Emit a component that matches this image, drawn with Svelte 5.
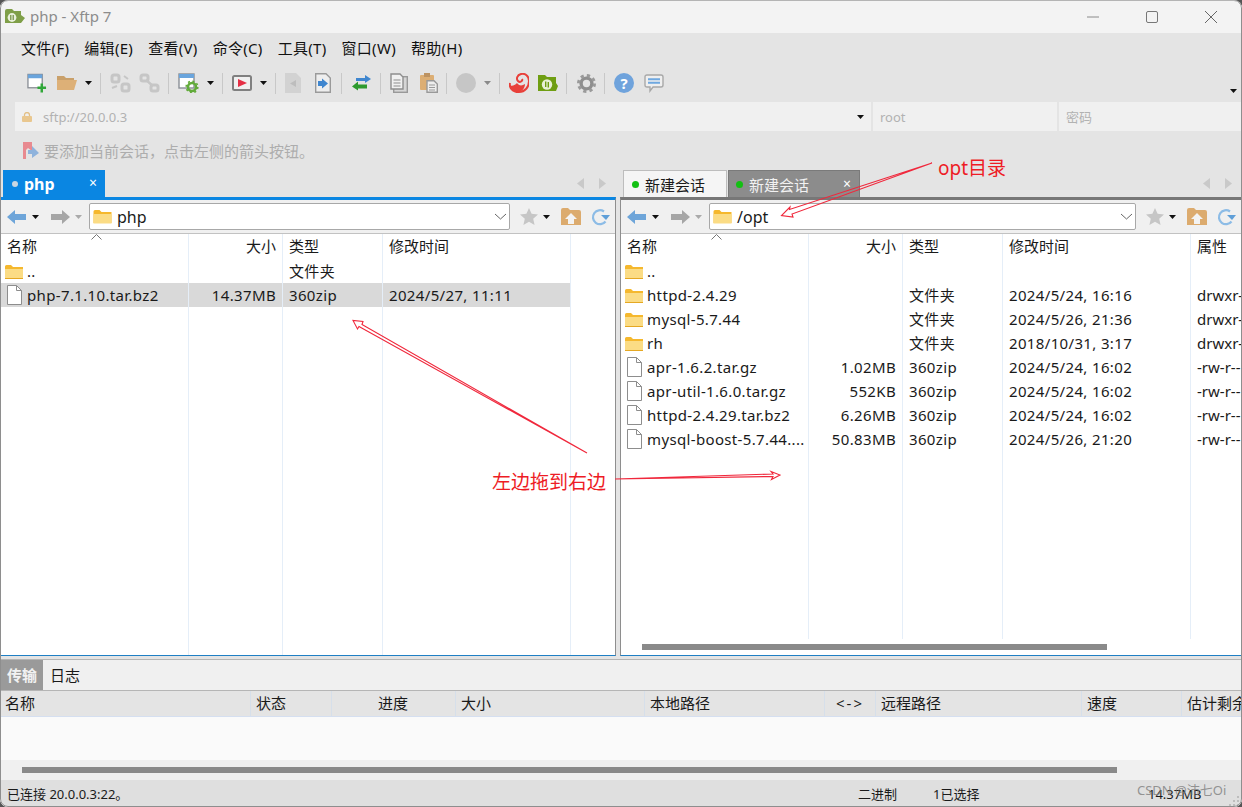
<script lang="ts">
  const menus = ["文件(F)", "编辑(E)", "查看(V)", "命令(C)", "工具(T)", "窗口(W)", "帮助(H)"];

  const leftCols = [
    { label: "名称", width: 188, name: true, sort: true, cells: ["..", "php-7.1.10.tar.bz2"] },
    { label: "大小", width: 94, right: true, cells: ["", "14.37MB"] },
    { label: "类型", width: 100, cells: ["文件夹", "360zip"] },
    { label: "修改时间", width: 188, cells: ["", "2024/5/27, 11:11"] },
    { label: "", width: 44, fill: true, cells: [] }
  ];

  const rightCols = [
    { label: "名称", width: 188, name: true, sort: true, cells: ["..", "httpd-2.4.29", "mysql-5.7.44", "rh", "apr-1.6.2.tar.gz", "apr-util-1.6.0.tar.gz", "httpd-2.4.29.tar.bz2", "mysql-boost-5.7.44...."] },
    { label: "大小", width: 94, right: true, cells: ["", "", "", "", "1.02MB", "552KB", "6.26MB", "50.83MB"] },
    { label: "类型", width: 100, cells: ["", "文件夹", "文件夹", "文件夹", "360zip", "360zip", "360zip", "360zip"] },
    { label: "修改时间", width: 188, cells: ["", "2024/5/24, 16:16", "2024/5/26, 21:36", "2018/10/31, 3:17", "2024/5/24, 16:02", "2024/5/24, 16:02", "2024/5/24, 16:02", "2024/5/26, 21:20"] },
    { label: "属性", width: 52, fill: true, cells: ["", "drwxr-", "drwxr-", "drwxr-", "-rw-r--", "-rw-r--", "-rw-r--", "-rw-r--"] }
  ];

  const transferCols = [
    { label: "名称", width: 251 },
    { label: "状态", width: 81 },
    { label: "进度", width: 124, right: true },
    { label: "大小", width: 189 },
    { label: "本地路径", width: 180 },
    { label: "<->", width: 51, center: true },
    { label: "远程路径", width: 206 },
    { label: "速度", width: 100 },
    { label: "估计剩余", width: 60 }
  ];
</script>

{#snippet folder()}
  <svg class="ficon" width="18" height="15" viewBox="0 0 18 15">
    <path d="M0 2.5Q0 1 1.5 1H6L8 3H18V14H0Z" fill="#f5b82e"/>
    <path d="M0 5H18V14.5H0Z" fill="#fbdc85"/>
    <path d="M0 14H18V15H0Z" fill="#e5a823"/>
  </svg>
{/snippet}

{#snippet file()}
  <svg class="ficon" width="18" height="22" viewBox="0 0 18 22">
    <path d="M2.5 1.5H11.5L16.5 6.5V20.5H2.5Z" fill="#fff" stroke="#8d8d8d"/>
    <path d="M11.5 1.5V6.5H16.5" fill="none" stroke="#8d8d8d"/>
  </svg>
{/snippet}

{#snippet caret(color = "#111")}
  <svg class="caret" width="7" height="4" viewBox="0 0 7 4"><path d="M0 0H7L3.5 4Z" fill={color}/></svg>
{/snippet}

{#snippet navBar(path: string, fieldWidth: number)}
  <div class="nav">
    <svg width="20" height="16" viewBox="0 0 20 16"><path d="M0 8L8 1V5H19V11H8V15Z" fill="#6ea5d9"/></svg>
    {@render caret()}
    <svg class="fwd" width="20" height="16" viewBox="0 0 20 16"><path d="M20 8L12 1V5H1V11H12V15Z" fill="#a6a6a6"/></svg>
    {@render caret("#aaa")}
    <div class="pathbox" style="width: {fieldWidth}px">
      <svg width="19" height="15" viewBox="0 0 18 15">
        <path d="M0 2.5Q0 1 1.5 1H6L8 3H18V14H0Z" fill="#f5b82e"/>
        <path d="M0 5H18V14.5H0Z" fill="#fbdc85"/>
      </svg>
      <span class="pathtext">{path}</span>
      <svg class="chev" width="13" height="7" viewBox="0 0 13 7"><path d="M1 1L6.5 6L12 1" fill="none" stroke="#666"/></svg>
    </div>
    <svg width="18" height="17" viewBox="0 0 18 17"><path d="M9 0L11.6 5.8L18 6.5L13.2 10.8L14.6 17L9 13.8L3.4 17L4.8 10.8L0 6.5L6.4 5.8Z" fill="#c6c6c6"/></svg>
    {@render caret()}
    <svg class="home" width="20" height="17" viewBox="0 0 20 17">
      <path d="M0 2Q0 0 2 0H7L9 2H18Q20 2 20 4V17H0Z" fill="#dcab6e"/>
      <path d="M10 5L16 11H13V16H7V11H4Z" fill="#f3f3f3"/>
    </svg>
    <svg class="refresh" width="20" height="18" viewBox="0 0 20 18">
      <path d="M15.5 13.5A7 7 0 1 1 14 3.5" fill="none" stroke="#8dbce6" stroke-width="2.2"/>
      <path d="M11 8H20L16 13Z" fill="#5f9fd8" transform="translate(0 -1)"/>
    </svg>
  </div>
{/snippet}

{#snippet fileTable(cols: any[], selected: number)}
  <div class="table">
    {#each cols as col}
      <div class="col" class:fill={col.fill} style="width: {col.width}px">
        <div class="colhead" class:end={col.right}>
          {col.label}
          {#if col.sort}
            <svg class="sort" width="11" height="6" viewBox="0 0 11 6"><path d="M0.5 5.5L5.5 0.5L10.5 5.5" fill="none" stroke="#777"/></svg>
          {/if}
        </div>
        <div class="cells">
          {#each col.cells as cell, i}
            <div class="cell" class:end={col.right} class:sel={i === selected}>
              {#if col.name}
                {#if /\.(gz|bz2)$|\.\.\.\.$/.test(cell)}
                  {@render file()}
                {:else}
                  {@render folder()}
                {/if}
              {/if}
              <span class="celltext">{cell}</span>
            </div>
          {/each}
        </div>
      </div>
    {/each}
  </div>
{/snippet}

<div class="window">
  <header class="titlebar">
    <svg width="20" height="16" viewBox="0 0 20 16">
      <path d="M0 2Q0 0 2 0H7L9 2H16V6L20 9L16 14H0Z" fill="#7f9f48"/>
      <circle cx="7" cy="8.5" r="4.4" fill="#e9f0dc"/>
      <path d="M5.8 6V11M8.2 6V11" stroke="#6d8d3c" stroke-width="1.2"/>
    </svg>
    <span class="apptitle">php - Xftp 7</span>
    <div class="winbtns">
      <svg width="14" height="14" viewBox="0 0 14 14"><path d="M1 7H13" stroke="#8a8a8a"/></svg>
      <svg width="14" height="14" viewBox="0 0 14 14"><rect x="1.5" y="1.5" width="11" height="11" rx="1.5" fill="none" stroke="#777"/></svg>
      <svg width="14" height="14" viewBox="0 0 14 14"><path d="M1 1L13 13M13 1L1 13" stroke="#666"/></svg>
    </div>
  </header>

  <nav class="menubar">
    {#each menus as m}<span class="menu">{m}</span>{/each}
  </nav>

  <div class="toolbar">
    <svg class="t" width="20" height="20" viewBox="0 0 21 20">
      <rect x="1" y="1" width="15" height="14" fill="#fff" stroke="#8a8f96" stroke-width="1.4"/>
      <rect x="1" y="1" width="15" height="4" fill="#6aa5dd"/>
      <path d="M11 15H20M15.5 10.5V20" stroke="#31a739" stroke-width="2.6"/>
    </svg>
    <svg class="t m2" width="20" height="16" viewBox="0 0 20 16">
      <path d="M0 1H7L9 3H17V6H0Z" fill="#c9a06a"/>
      <path d="M0 5H20L17 15H0Z" fill="#ddb077"/>
    </svg>
    {@render caret()}
    <i class="sep"></i>
    <svg class="t" width="21" height="20" viewBox="0 0 21 20" fill="none" stroke="#c6c6c6" stroke-width="3">
      <rect x="2" y="2" width="7" height="7" rx="2"/>
      <rect x="12" y="11" width="7" height="7" rx="2"/>
      <path d="M2 15L7 13M14 3L18 6" stroke-width="2"/>
    </svg>
    <svg class="t" width="21" height="20" viewBox="0 0 21 20" fill="none" stroke="#c6c6c6" stroke-width="3">
      <rect x="2" y="2" width="7" height="6" rx="2"/>
      <rect x="12" y="12" width="7" height="6" rx="2"/>
      <path d="M7 7L14 13" stroke-width="2.4"/>
    </svg>
    <i class="sep"></i>
    <svg class="t" width="21" height="20" viewBox="0 0 21 20">
      <rect x="1" y="1" width="15" height="14" fill="#fff" stroke="#8a8f96" stroke-width="1.4"/>
      <rect x="1" y="1" width="15" height="4" fill="#6aa5dd"/>
      <circle cx="14" cy="14" r="4" fill="none" stroke="#62ab3a" stroke-width="2.6"/>
      <circle cx="14" cy="14" r="5.8" fill="none" stroke="#62ab3a" stroke-width="1.6" stroke-dasharray="2 2.5"/>
    </svg>
    {@render caret()}
    <i class="sep"></i>
    <svg class="t" width="20" height="16" viewBox="0 0 20 16">
      <rect x="1" y="1" width="18" height="14" rx="1.5" fill="#f0f0f0" stroke="#808080" stroke-width="2"/>
      <path d="M6 4L15 8L6 12Z" fill="#e52f45"/>
    </svg>
    {@render caret()}
    <i class="sep"></i>
    <svg class="t" width="16" height="20" viewBox="0 0 16 20">
      <path d="M0 0H11L16 5V20H0Z" fill="#d2d2d2"/>
      <path d="M11 7V14L5 10.5Z" fill="#bdbdbd"/>
    </svg>
    <svg class="t m6" width="16" height="20" viewBox="0 0 16 20">
      <path d="M0.7 0.7H11L15.3 5V19.3H0.7Z" fill="#eee" stroke="#9a9a9a" stroke-width="1.4"/>
      <path d="M3 8H7V5.5L13 10.5L7 15.5V13H3Z" fill="#3f86cf"/>
    </svg>
    <i class="sep m2"></i>
    <svg class="t" width="21" height="16" viewBox="0 0 21 16">
      <path d="M5 3H14V0L20 4L14 8V6H5Z" fill="#3f86cf"/>
      <path d="M16 10H7V7L1 12L7 16V14H16Z" fill="#2e9a2e" transform="translate(0 -0.5)"/>
    </svg>
    <i class="sep"></i>
    <svg class="t" width="18" height="20" viewBox="0 0 18 20">
      <rect x="3.7" y="3.7" width="13.6" height="15.6" fill="#d6d6d6" stroke="#999" stroke-width="1.4"/>
      <path d="M1 1H10L13 4V16H1Z" fill="#f0f0f0" stroke="#8d8d8d" stroke-width="1.4"/>
      <path d="M3.5 7H10.5M3.5 10H10.5M3.5 13H10.5" stroke="#8d8d8d"/>
    </svg>
    <svg class="t m4" width="18" height="20" viewBox="0 0 18 20">
      <rect x="0" y="2" width="14" height="15" rx="1" fill="#dcae74"/>
      <rect x="4" y="0" width="6" height="4" fill="#bd9362"/>
      <path d="M7 7.7H14L17.3 11V19.3H7Z" fill="#eee" stroke="#999" stroke-width="1.4"/>
      <path d="M9 12H15M9 14.5H15M9 17H15" stroke="#9a9a9a"/>
    </svg>
    <i class="sep"></i>
    <svg class="t" width="20" height="20" viewBox="0 0 20 20"><circle cx="10" cy="10" r="10" fill="#c6c6c6"/></svg>
    {@render caret("#8a8a8a")}
    <i class="sep"></i>
    <svg class="t" width="20" height="20" viewBox="0 0 20 20">
      <path d="M1 10C0 14 3 19 10 19C16 19 20 14 20 8C20 3 16 0 12 1C8 2 7 6 9 8C11 10 14 8 13 6" fill="none" stroke="#e8403a" stroke-width="2"/>
      <path d="M0 11C2 14 5 13 8 10C10 13 13 13 16 11C16 16 12 19 9 19C4 19 1 16 0 11Z" fill="#e8403a"/>
    </svg>
    <svg class="t m1" width="20" height="17" viewBox="0 0 20 17">
      <path d="M0 0H7L9 2H18V8L20 11L18 16H0Z" fill="#6f9e12"/>
      <circle cx="9" cy="9.5" r="5.2" fill="#e8f0d5"/>
      <path d="M7.7 6.5V12M10.3 7V12.5" stroke="#6f9e12" stroke-width="1.4"/>
    </svg>
    <i class="sep"></i>
    <svg class="t m1" width="19" height="19" viewBox="0 0 19 19">
      <circle cx="9.5" cy="9.5" r="5.4" fill="none" stroke="#8f8f8f" stroke-width="3.4"/>
      <circle cx="9.5" cy="9.5" r="8" fill="none" stroke="#9a9a9a" stroke-width="3" stroke-dasharray="3.2 3.1"/>
    </svg>
    <i class="sep"></i>
    <svg class="t" width="20" height="20" viewBox="0 0 20 20">
      <circle cx="10" cy="10" r="10" fill="#6fa3dc"/>
      <text x="10" y="15.5" text-anchor="middle" class="qmark">?</text>
    </svg>
    <svg class="t m2" width="20" height="19" viewBox="0 0 20 19">
      <path d="M3 1H17Q19 1 19 3V11Q19 13 17 13H9L6 17V13H3Q1 13 1 11V3Q1 1 3 1Z" fill="#efefef" stroke="#a8a8a8" stroke-width="1.4"/>
      <path d="M4 5.2H16M4 8.8H16" stroke="#6fa8e0" stroke-width="2"/>
    </svg>
    <span class="overflow">{@render caret()}</span>
  </div>

  <div class="addressrow">
    <div class="addr host">
      <svg width="10" height="10" viewBox="0 0 10 10">
        <path d="M2.5 4V3A2.5 2.5 0 0 1 7.5 3V4" fill="none" stroke="#e3bf85" stroke-width="1.3"/>
        <rect x="0" y="4" width="10" height="6" rx="1" fill="#e9c78f"/>
      </svg>
      <span>sftp://20.0.0.3</span>
      <span class="addrcaret">{@render caret()}</span>
    </div>
    <div class="addr user">root</div>
    <div class="addr pass">密码</div>
  </div>

  <div class="hint">
    <svg width="16" height="17" viewBox="0 0 16 17">
      <path d="M0 0H9V9L5 6L3 8V17H0Z" fill="#e88a90"/>
      <path d="M5 8H9V4L16 11L9 16V12H5Z" fill="#8fb3dc"/>
    </svg>
    <span>要添加当前会话，点击左侧的箭头按钮。</span>
  </div>

  <main class="panes">
    <section class="pane local">
      <div class="tabs">
        <div class="tab active">
          <i class="dot grey"></i><b>php</b><span class="close">×</span>
        </div>
        <div class="tabnav">
          <svg width="7" height="11" viewBox="0 0 7 11"><path d="M7 0V11L0 5.5Z" fill="#c9c9c9"/></svg>
          <svg width="7" height="11" viewBox="0 0 7 11"><path d="M0 0V11L7 5.5Z" fill="#c9c9c9"/></svg>
        </div>
      </div>
      <div class="panebody blue">
        {@render navBar("php", 421)}
        {@render fileTable(leftCols, 1)}
      </div>
    </section>

    <section class="pane remote">
      <div class="tabs">
        <div class="tab plain"><i class="dot green"></i>新建会话</div>
        <div class="tab dark"><i class="dot green"></i>新建会话<span class="close">×</span></div>
        <div class="tabnav">
          <svg width="7" height="11" viewBox="0 0 7 11"><path d="M7 0V11L0 5.5Z" fill="#c9c9c9"/></svg>
          <svg width="7" height="11" viewBox="0 0 7 11"><path d="M0 0V11L7 5.5Z" fill="#c9c9c9"/></svg>
        </div>
      </div>
      <div class="panebody">
        {@render navBar("/opt", 427)}
        {@render fileTable(rightCols, -1)}
        <div class="hscroll"><i></i></div>
      </div>
    </section>
  </main>

  <section class="transfers">
    <div class="ttabs">
      <span class="ttab on">传输</span>
      <span class="ttab">日志</span>
    </div>
    <div class="thead">
      {#each transferCols as c}
        <span class="th" class:end={c.right} class:center={c.center} style="width: {c.width}px">{c.label}</span>
      {/each}
    </div>
    <div class="tbody"></div>
    <div class="tscroll"><i></i></div>
  </section>

  <footer class="status">
    <span class="connected">已连接 20.0.0.3:22。</span>
    <span class="mode">二进制</span>
    <span class="selcount">1已选择</span>
    <span class="bytes">14.37MB</span>
    <svg class="grip" width="13" height="11" viewBox="0 0 13 11" fill="#bdbdbd">
      <rect x="10" y="0" width="2" height="2"/>
      <rect x="6" y="4" width="2" height="2"/>
      <rect x="10" y="4" width="2" height="2"/>
      <rect x="2" y="8" width="2" height="2"/>
      <rect x="6" y="8" width="2" height="2"/>
      <rect x="10" y="8" width="2" height="2"/>
    </svg>
  </footer>

  <svg class="marks" width="1242" height="807" viewBox="0 0 1242 807">
    <g fill="none" stroke="#f0283c" stroke-width="1.1">
      <path d="M932 163L789.5 209.5L790 207L781.5 215.5L793 217L792 214L932 163"/>
      <path d="M587 453L362 324.5L363 321.5L353 320.5L357.5 329L359 326.5L587 453"/>
      <path d="M615 479L773 474L771 471.5L780 475L771.5 479.5L773 476.5L615 479"/>
    </g>
  </svg>
  <span class="note opt">opt目录</span>
  <span class="note drag">左边拖到右边</span>
  <span class="watermark">CSDN @沛七Oi</span>
  <div class="frame"></div>
</div>

<style>
  :global(body) {
    margin: 0;
    background: #555;
  }

  .window {
    position: relative;
    width: 1242px;
    height: 807px;
    overflow: hidden;
    display: flex;
    flex-direction: column;
    background: #e4e4e4;
    font-family: "Noto Sans", "Noto Sans CJK SC", sans-serif;
    font-size: 15px;
    color: #1a1a1a;
    box-sizing: border-box;
    border-top: 1px solid #b4b4b4;
    border-radius: 8px;
  }

  .titlebar {
    height: 32px;
    flex: none;
    background: #f3f3f3;
    display: flex;
    align-items: center;
    padding: 0 0 0 5px;
    gap: 5px;
    box-sizing: border-box;
  }

  .apptitle {
    color: #8c8c8c;
    font-size: 15px;
    padding-bottom: 2px;
  }

  .winbtns {
    margin-left: auto;
    display: flex;
    gap: 45px;
    padding-right: 24px;
  }

  .menubar {
    height: 31px;
    flex: none;
    display: flex;
    align-items: center;
    padding: 0 0 3px 21px;
    box-sizing: border-box;
    gap: 15px;
    font-size: 15px;
    letter-spacing: 0.3px;
    color: #111;
  }

  .toolbar {
    height: 38px;
    flex: none;
    display: flex;
    align-items: center;
    padding-left: 27px;
    gap: 8px;
    position: relative;
  }

  .t {
    flex: none;
  }

  .m1 {
    margin-left: 1px;
  }

  .m2 {
    margin-left: 2px;
  }

  .m4 {
    margin-left: 4px;
  }

  .m6 {
    margin-left: 6px;
  }

  .caret {
    flex: none;
    display: block;
  }

  .sep {
    width: 1px;
    height: 21px;
    background: #c8c8c8;
    flex: none;
    margin-right: 1px;
  }

  .qmark {
    fill: #fff;
    font-size: 15px;
    font-weight: 700;
    font-family: "Noto Sans", sans-serif;
  }

  .overflow {
    position: absolute;
    right: 5px;
    bottom: 9px;
  }

  .addressrow {
    height: 29px;
    flex: none;
    margin-left: 15px;
    display: flex;
    gap: 2px;
    color: #b2b2b2;
    font-size: 13px;
  }

  .addr {
    background: #f0f0f0;
    display: flex;
    align-items: center;
    padding-left: 7px;
    box-sizing: border-box;
  }

  .host {
    width: 856px;
    flex: none;
    gap: 11px;
  }

  .addrcaret {
    margin-left: auto;
    padding-right: 7px;
  }

  .user {
    width: 184px;
    flex: none;
  }

  .pass {
    flex: 1;
  }

  .hint {
    height: 39px;
    flex: none;
    display: flex;
    align-items: center;
    padding-left: 23px;
    gap: 5px;
    color: #adadad;
    font-size: 15px;
  }

  .panes {
    flex: none;
    height: 486px;
    display: flex;
    gap: 4px;
  }

  .pane {
    display: flex;
    flex-direction: column;
  }

  .local {
    width: 616px;
    flex: none;
  }

  .remote {
    flex: 1;
    min-width: 0;
  }

  .tabs {
    height: 27px;
    flex: none;
    display: flex;
    align-items: flex-end;
    position: relative;
  }

  .tab {
    display: flex;
    align-items: center;
    box-sizing: border-box;
    position: relative;
    height: 27px;
  }

  .tab.active {
    margin-left: 3px;
    width: 102px;
    background: #0a86e2;
    color: #fff;
    font-size: 16px;
    padding-left: 9px;
    gap: 6px;
  }

  .tab.plain {
    margin-left: 3px;
    width: 104px;
    background: #f5f5f5;
    border: 1px solid #bdbdbd;
    border-bottom: 0;
    padding-left: 8px;
    gap: 6px;
  }

  .tab.dark {
    width: 132px;
    margin-left: 1px;
    background: #8c8c8c;
    border: 1px solid #7a7a7a;
    border-bottom: 0;
    color: #f2f2f2;
    padding-left: 7px;
    gap: 6px;
  }

  .dot {
    width: 6px;
    height: 6px;
    border-radius: 50%;
    flex: none;
  }

  .dot.grey {
    background: #c9d6e2;
  }

  .dot.green {
    background: #12c012;
    width: 7px;
    height: 7px;
  }

  .close {
    position: absolute;
    right: 8px;
    top: 3px;
    font-size: 14px;
    font-weight: 400;
    color: #fff;
  }

  .tabnav {
    margin-left: auto;
    display: flex;
    gap: 15px;
    padding: 0 10px 8px 0;
  }

  .panebody {
    flex: 1;
    min-height: 0;
    display: flex;
    flex-direction: column;
    border: 1px solid #8e8e8e;
    border-top-width: 3px;
    border-top-color: #777;
    border-bottom: 1px solid #1f7fc4;
    border-right: 0;
    background: #fff;
  }

  .panebody.blue {
    border-top-color: #0a86e2;
    border-right: 1px solid #8e8e8e;
  }

  .nav {
    height: 33px;
    flex: none;
    background: #f0f0f0;
    display: flex;
    align-items: center;
    gap: 5px;
    padding-left: 6px;
    border-bottom: 1px solid #c2c2c2;
  }

  .fwd {
    margin-left: 6px;
  }

  .pathbox {
    flex: none;
    height: 27px;
    margin-left: 2px;
    box-sizing: border-box;
    background: #fff;
    border: 1px solid #a8a8a8;
    border-radius: 2px;
    display: flex;
    align-items: center;
    padding-left: 3px;
    gap: 5px;
    margin-right: 5px;
  }

  .pathtext {
    font-size: 16px;
  }

  .chev {
    margin-left: auto;
    margin-right: 2px;
  }

  .home {
    margin-left: 6px;
  }

  .refresh {
    margin-left: 4px;
  }

  .table {
    flex: 1;
    min-height: 0;
    display: flex;
    overflow: hidden;
  }

  .col {
    flex: none;
    box-sizing: border-box;
    border-right: 1px solid #e5eef8;
    display: flex;
    flex-direction: column;
    min-width: 0;
  }

  .col.fill {
    flex: 1;
    border-right: 0;
  }

  .colhead {
    height: 25px;
    flex: none;
    display: flex;
    align-items: center;
    padding: 0 6px 3px;
    position: relative;
    box-sizing: border-box;
    white-space: nowrap;
  }

  .colhead.end,
  .cell.end {
    justify-content: flex-end;
  }

  .sort {
    position: absolute;
    left: 90px;
    top: 0;
  }

  .cells {
    flex: 1;
    display: flex;
    flex-direction: column;
  }

  .cell {
    height: 24px;
    flex: none;
    display: flex;
    align-items: center;
    padding: 0 6px;
    gap: 4px;
    white-space: nowrap;
    overflow: hidden;
    box-sizing: border-box;
  }

  .celltext {
    letter-spacing: 0.35px;
    margin-bottom: 1px;
  }

  .col.fill .celltext {
    letter-spacing: 0;
  }

  .cell.sel {
    background: #d9d9d9;
  }

  .ficon {
    flex: none;
    margin-left: -2px;
  }

  .hscroll {
    height: 16px;
    flex: none;
    padding-left: 21px;
    display: flex;
    align-items: center;
  }

  .hscroll i {
    width: 465px;
    height: 6px;
    background: #8a8a8a;
  }

  .transfers {
    margin-top: 3px;
    border-top: 1px solid #b5b5b5;
    flex: none;
    background: #f0f0f0;
  }

  .ttabs {
    height: 30px;
    display: flex;
    border-bottom: 1px solid #b5b5b5;
  }

  .ttab {
    padding-bottom: 2px;
    box-sizing: border-box;
    display: flex;
    align-items: center;
    justify-content: center;
    width: 44px;
    white-space: nowrap;
  }

  .ttab.on {
    background: #9a9a9a;
    color: #f2f2f2;
    font-weight: 700;
    margin-left: 1px;
    width: 42px;
  }

  .thead {
    height: 26px;
    display: flex;
    background: #e4e4e4;
    border-bottom: 1px solid #d5dff0;
    box-sizing: border-box;
  }

  .th {
    flex: none;
    box-sizing: border-box;
    border-right: 1px solid #d6dfea;
    padding: 0 5px 2px;
    display: flex;
    align-items: center;
    white-space: nowrap;
    overflow: hidden;
  }

  .th.end {
    justify-content: flex-end;
    padding-right: 47px;
  }

  .th.center {
    justify-content: center;
    letter-spacing: 2px;
  }

  .tbody {
    height: 43px;
    background: #fafafa;
  }

  .tscroll {
    height: 20px;
    display: flex;
    align-items: center;
    padding-left: 22px;
  }

  .tscroll i {
    width: 1095px;
    height: 6px;
    background: #8a8a8a;
  }

  .status {
    flex: 1;
    background: #dfdfdf;
    display: flex;
    align-items: center;
    padding-left: 7px;
    font-size: 13px;
  }

  .connected {
    width: 851px;
  }

  .mode {
    width: 75px;
  }

  .selcount {
    width: 215px;
  }

  .grip {
    margin: auto 2px 0 auto;
  }

  .marks {
    position: absolute;
    left: 0;
    top: -1px;
    pointer-events: none;
  }

  .note {
    position: absolute;
    color: #ee1c25;
    font-size: 19px;
    white-space: nowrap;
  }

  .opt {
    left: 938px;
    top: 152px;
  }

  .drag {
    left: 492px;
    top: 466px;
  }

  .watermark {
    position: absolute;
    left: 1137px;
    top: 779px;
    font-size: 13px;
    color: rgba(125, 125, 125, 0.8);
    white-space: nowrap;
  }

  .frame {
    position: absolute;
    inset: -1px 0 0;
    border: 1px solid #8e8e8e;
    border-radius: 8px;
    pointer-events: none;
  }
</style>
